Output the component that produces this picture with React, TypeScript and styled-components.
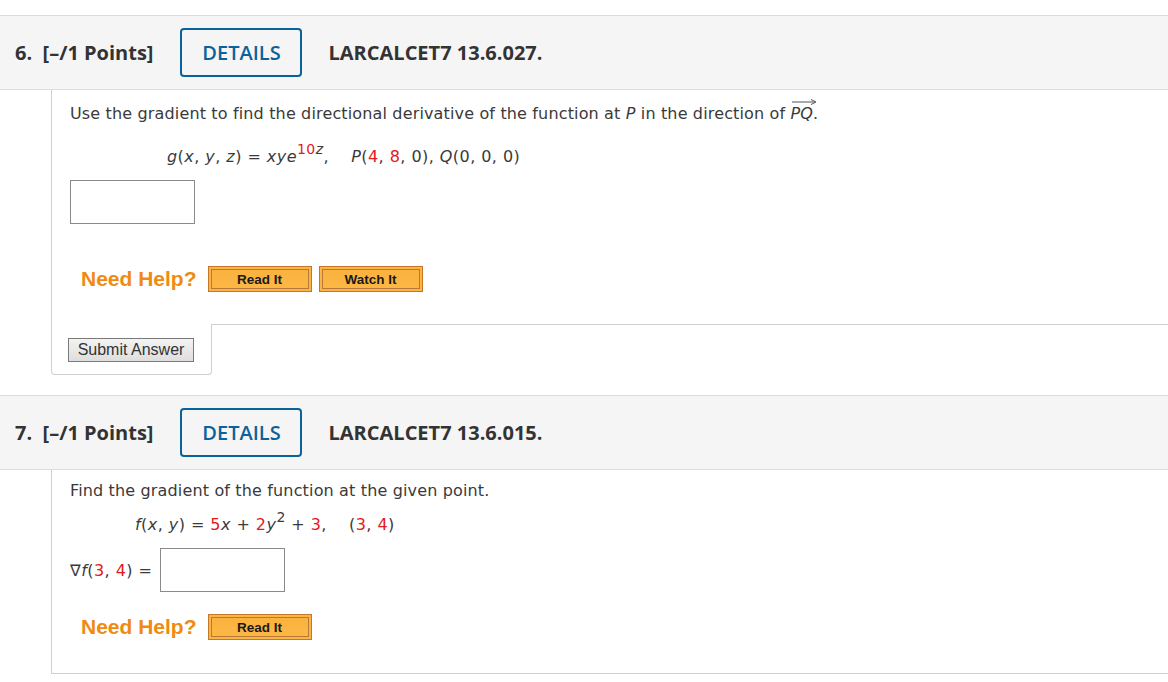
import React from 'react'
import styled, {createGlobalStyle} from 'styled-components'

const GlobalStyle = createGlobalStyle`
    body {
        margin: 0;
        background: #fff;
    }
`

const Page = styled.div`
    width: 1168px;
    padding-top: 15px;
`

const Question = styled.section<{last?: boolean}>`
    margin-bottom: ${({last}) => (last ? '0' : '20px')};
`

const Header = styled.div`
    display: flex;
    align-items: center;
    height: 73px;
    padding-left: 15px;
    background: #f5f5f5;
    border-top: 1px solid #dcdcdc;
    border-bottom: 1px solid #dcdcdc;
    font-family: 'Open Sans', sans-serif;
    font-size: 20px;
    color: #333;
`

const Num = styled.span`
    font-weight: 700;
    white-space: pre;
`

const DetailsButton = styled.button`
    box-sizing: border-box;
    width: 122px;
    height: 49px;
    margin: 0 26px 0 27px;
    background: transparent;
    border: 2px solid #0b629b;
    border-radius: 4px;
    font-family: 'Open Sans', sans-serif;
    font-size: 20px;
    font-weight: 600;
    color: #0b629b;
`

const Code = styled.span`
    font-weight: 700;
`

const Body = styled.div<{closed?: boolean}>`
    margin-left: 51px;
    padding: 14px 0 0 18px;
    border-left: 1px solid #cfcfcf;
    border-bottom: ${({closed}) => (closed ? '1px solid #cfcfcf' : 'none')};
    font-family: 'DejaVu Sans', sans-serif;
    font-size: 16px;
    color: #3a3a3a;
`

const Line = styled.div<{indent?: number; top?: number; math?: boolean}>`
    height: 20px;
    line-height: 20px;
    padding-left: ${({indent}) => indent ?? 0}px;
    margin-top: ${({top}) => top ?? 0}px;
    letter-spacing: ${({math}) => (math ? '0.45px' : '0.15px')};
    white-space: pre;
`

const I = styled.i`
    font-style: italic;
`

const Red = styled.span`
    color: #e3191b;
`

const Sup = styled.sup`
    font-size: 14px;
    line-height: 0;
    vertical-align: 8px;
`

const Vec = styled.span`
    position: relative;
    display: inline-block;
    font-style: italic;

    svg {
        position: absolute;
        left: 0;
        top: -6px;
    }
`

const AnswerBox = styled.div`
    box-sizing: border-box;
    width: 125px;
    height: 44px;
    border: 1px solid #8a8a8a;
    background: #fff;
`

const AnswerRow = styled.div<{top: number}>`
    display: flex;
    align-items: center;
    gap: 8px;
    margin-top: ${({top}) => top}px;
    letter-spacing: 0.45px;
`

const HelpRow = styled.div<{top: number; bottom: number}>`
    display: flex;
    align-items: center;
    margin-top: ${({top}) => top}px;
    padding-bottom: ${({bottom}) => bottom}px;
    padding-left: 11px;
`

const NeedHelp = styled.span`
    font-family: 'Liberation Sans', Arial, sans-serif;
    font-weight: 700;
    font-size: 21px;
    color: #ef8a13;
    margin-right: 11px;
`

const HelpButton = styled.button`
    box-sizing: border-box;
    width: 104px;
    height: 26px;
    margin-right: 7px;
    padding: 0;
    border: 1px solid #c4762b;
    box-shadow: inset 0 0 0 2px #fcb443, inset 0 0 0 3px #b8783a;
    background: linear-gradient(#f9b040, #fdb944);
    font-family: 'Liberation Sans', Arial, sans-serif;
    font-weight: 700;
    font-size: 13.5px;
    color: #1a1a1a;
`

const Footer = styled.div`
    display: flex;
    align-items: stretch;
`

const SubmitTab = styled.div`
    box-sizing: border-box;
    width: 161px;
    height: 51px;
    margin-left: 51px;
    padding: 14px 0 0 16px;
    border: 1px solid #cfcfcf;
    border-top: none;
    border-radius: 0 0 4px 4px;
`

const Filler = styled.div`
    flex: 1;
    border-top: 1px solid #cfcfcf;
`

const SubmitButton = styled.button`
    box-sizing: border-box;
    width: 126px;
    height: 24px;
    padding: 0;
    border: 1px solid #7a7a7a;
    background: linear-gradient(#f3f3f3, #dedede);
    font-family: 'Liberation Sans', Arial, sans-serif;
    font-size: 16px;
    color: #333;
`

function Arrow() {
    return (
        <svg width="26" height="8" viewBox="0 0 26 8">
            <line x1="1" y1="4" x2="24" y2="4" stroke="#555" strokeWidth="1" />
            <path d="M20 1.5 L25 4 L20 6.5" fill="none" stroke="#555" strokeWidth="1" />
        </svg>
    )
}

function QuestionHeader({num, code}: {num: string; code: string}) {
    return (
        <Header>
            <Num>{`${num}.  [–/1 Points]`}</Num>
            <DetailsButton>DETAILS</DetailsButton>
            <Code>{code}</Code>
        </Header>
    )
}

function Help({watch}: {watch?: boolean}) {
    return (
        <>
            <NeedHelp>Need Help?</NeedHelp>
            <HelpButton>Read It</HelpButton>
            {watch && <HelpButton>Watch It</HelpButton>}
        </>
    )
}

export default function App() {
    return (
        <Page>
            <GlobalStyle />
            <Question>
                <QuestionHeader num="6" code="LARCALCET7 13.6.027." />
                <Body>
                    <Line>
                        Use the gradient to find the directional derivative of the function at <I>P</I> in the direction of{' '}
                        <Vec>
                            PQ
                            <Arrow />
                        </Vec>
                        .
                    </Line>
                    <Line indent={97} top={23} math>
                        <I>g</I>(<I>x</I>, <I>y</I>, <I>z</I>) = <I>xye</I>
                        <Sup>
                            <Red>10</Red>
                            <I>z</I>
                        </Sup>
                        {',    '}
                        <I>P</I>(<Red>4</Red>, <Red>8</Red>, 0), <I>Q</I>(0, 0, 0)
                    </Line>
                    <AnswerRow top={13}>
                        <AnswerBox />
                    </AnswerRow>
                    <HelpRow top={42} bottom={32}>
                        <Help watch />
                    </HelpRow>
                </Body>
                <Footer>
                    <SubmitTab>
                        <SubmitButton>Submit Answer</SubmitButton>
                    </SubmitTab>
                    <Filler />
                </Footer>
            </Question>
            <Question last>
                <QuestionHeader num="7" code="LARCALCET7 13.6.015." />
                <Body closed>
                    <Line top={-3}>Find the gradient of the function at the given point.</Line>
                    <Line indent={65} top={14} math>
                        <I>f</I>(<I>x</I>, <I>y</I>) = <Red>5</Red>
                        <I>x</I> + <Red>2</Red>
                        <I>y</I>
                        <Sup>2</Sup>
                        {' + '}
                        <Red>3</Red>
                        {',    ('}
                        <Red>3</Red>, <Red>4</Red>)
                    </Line>
                    <AnswerRow top={13}>
                        <span>
                            ∇<I>f</I>(<Red>3</Red>, <Red>4</Red>) =
                        </span>
                        <AnswerBox />
                    </AnswerRow>
                    <HelpRow top={22} bottom={33}>
                        <Help />
                    </HelpRow>
                </Body>
            </Question>
        </Page>
    )
}
